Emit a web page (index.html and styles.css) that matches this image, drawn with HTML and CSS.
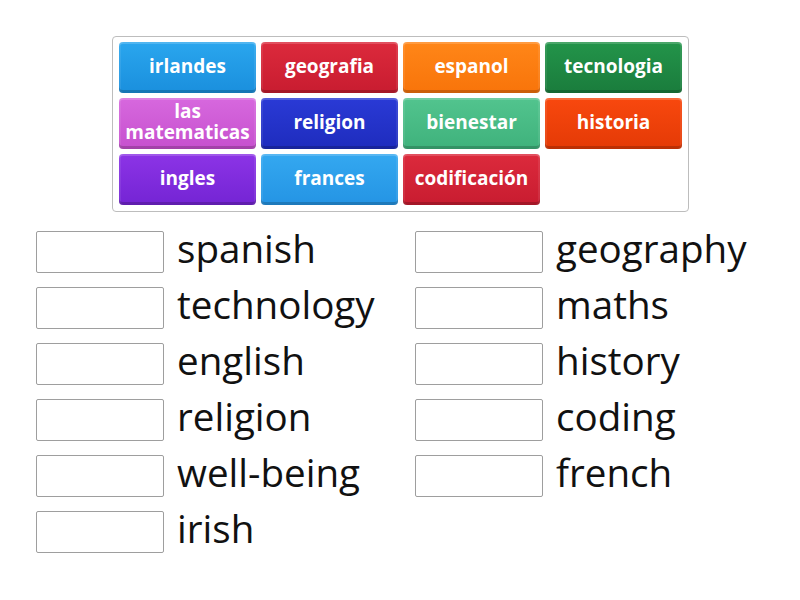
FILE: index.html
```html
<!DOCTYPE html>
<html>
<head>
<meta charset="utf-8">
<link rel="stylesheet" href="styles.css">
</head>
<body>
<div class="page">
  <div class="bank">
    <div class="tile c-blue">irlandes</div>
    <div class="tile c-red">geografia</div>
    <div class="tile c-orange">espanol</div>
    <div class="tile c-green">tecnologia</div>
    <div class="tile c-pink">las matematicas</div>
    <div class="tile c-navy">religion</div>
    <div class="tile c-teal">bienestar</div>
    <div class="tile c-vermilion">historia</div>
    <div class="tile c-purple">ingles</div>
    <div class="tile c-sky">frances</div>
    <div class="tile c-red">codificación</div>
  </div>
  <div class="targets">
    <div class="col">
      <div class="row"><div class="slot"></div><span class="word">spanish</span></div>
      <div class="row"><div class="slot"></div><span class="word">technology</span></div>
      <div class="row"><div class="slot"></div><span class="word">english</span></div>
      <div class="row"><div class="slot"></div><span class="word">religion</span></div>
      <div class="row"><div class="slot"></div><span class="word">well-being</span></div>
      <div class="row"><div class="slot"></div><span class="word">irish</span></div>
    </div>
    <div class="col">
      <div class="row"><div class="slot"></div><span class="word">geography</span></div>
      <div class="row"><div class="slot"></div><span class="word">maths</span></div>
      <div class="row"><div class="slot"></div><span class="word">history</span></div>
      <div class="row"><div class="slot"></div><span class="word">coding</span></div>
      <div class="row"><div class="slot"></div><span class="word">french</span></div>
    </div>
  </div>
</div>
</body>
</html>
```
FILE: styles.css
```css
html, body {
  margin: 0;
  padding: 0;
  background: #ffffff;
}
body {
  font-family: "Open Sans", "Liberation Sans", sans-serif;
}
.page {
  padding-top: 36px;
}
.bank {
  margin-left: 112px;
  width: 563px;
  padding: 5px 6px 6px 6px;
  border: 1px solid #bdbdbd;
  border-radius: 4px;
  display: grid;
  grid-template-columns: repeat(4, 137px);
  grid-auto-rows: 51px;
  gap: 5px 5px;
}
.tile {
  border-radius: 4px;
  color: #ffffff;
  font-weight: 700;
  font-size: 19px;
  line-height: 21px;
  display: flex;
  align-items: center;
  justify-content: center;
  text-align: center;
  padding: 0 3px 3px;
  box-sizing: border-box;
  box-shadow: inset 0 -3px 0 rgba(0,0,0,0.18), inset 0 2px 0 rgba(255,255,255,0.18), inset 2px 0 0 rgba(255,255,255,0.08), inset -2px 0 0 rgba(255,255,255,0.08);
}
.c-blue { background: linear-gradient(#2aa6ee, #1a8fdd); }
.c-red { background: linear-gradient(#dc2a3c, #c81c30); }
.c-orange { background: linear-gradient(#ff8618, #f8740a); }
.c-green { background: linear-gradient(#23944a, #1a7c3c); }
.c-pink { background: linear-gradient(#d768de, #c650ce); }
.c-navy { background: linear-gradient(#2a3ad6, #1e2cbd); }
.c-teal { background: linear-gradient(#52c48e, #3fb27c); }
.c-vermilion { background: linear-gradient(#f8480e, #e43a06); }
.c-purple { background: linear-gradient(#8c34e6, #7424d4); }
.c-sky { background: linear-gradient(#34a8f0, #2494e4); }

.targets {
  display: flex;
  margin-top: 19px;
  margin-left: 36px;
}
.col {
  width: 379px;
  display: flex;
  flex-direction: column;
  gap: 14px;
}
.row {
  display: flex;
  align-items: center;
  height: 42px;
}
.slot {
  width: 126px;
  height: 40px;
  border: 1px solid #9e9e9e;
  border-radius: 2px;
  flex: none;
  background: #fff;
}
.word {
  margin-left: 13px;
  font-size: 38.6px;
  line-height: 42px;
  color: #111111;
  position: relative;
  top: -4px;
}
```
